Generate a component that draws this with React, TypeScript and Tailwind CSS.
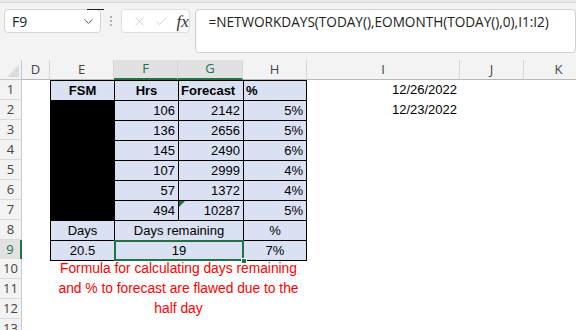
import { Check, ChevronDown, X } from "lucide-react";
import type { ReactNode } from "react";

const ui = "font-['Open_Sans',sans-serif]";
const cellFont = "font-['Liberation_Sans',Arial,sans-serif] text-[13px] text-black";

const cols = [
  { key: "D", w: "w-[28px]" },
  { key: "E", w: "w-[64px]" },
  { key: "F", w: "w-[64px]", sel: true },
  { key: "G", w: "w-[65px]", sel: true },
  { key: "H", w: "w-[64px]" },
  { key: "I", w: "w-[153px]" },
  { key: "J", w: "w-[64px]" },
  { key: "K", w: "w-[70px]" },
];

const data = [
  { hrs: 106, fc: 2142, pct: "5%" },
  { hrs: 136, fc: 2656, pct: "5%" },
  { hrs: 145, fc: 2490, pct: "6%" },
  { hrs: 107, fc: 2999, pct: "4%" },
  { hrs: 57, fc: 1372, pct: "4%" },
  { hrs: 494, fc: 10287, pct: "5%", flag: true },
];

const dates: Record<number, string> = { 1: "12/26/2022", 2: "12/23/2022" };

function RowHead({ n, sel }: { n: number; sel?: boolean }) {
  return (
    <div
      className={`w-[22px] shrink-0 flex items-center justify-center border-b border-[#dadada] text-[13px] ${ui} ${
        sel
          ? "bg-[#e1e1e1] text-[#217346] border-r-2 border-r-[#217346]"
          : "bg-[#f3f3f3] text-[#444] border-r border-r-[#c8c8c8]"
      }`}
    >
      {n}
    </div>
  );
}

function Cell({
  w,
  className = "",
  children,
}: {
  w: string;
  className?: string;
  children?: ReactNode;
}) {
  return (
    <div className={`${w} shrink-0 flex items-center ${cellFont} ${className}`}>
      {children}
    </div>
  );
}

function Tail({ row }: { row: number }) {
  return (
    <>
      <Cell w="w-[153px]" className="justify-end pr-[3px]">
        {dates[row]}
      </Cell>
      <Cell w="w-[64px]" />
      <Cell w="w-[70px]" />
    </>
  );
}

const tb = "border-l border-t border-black";
const blue = "bg-[#d9e1f2]";

export default function App() {
  return (
    <div className="w-[576px] h-[330px] overflow-hidden bg-white">
      {/* formula bar */}
      <div className="h-[60px] bg-[#f3f3f3]">
        <div className="h-[3px] bg-[#e9e9e9] border-b border-[#d6d6d6]" />
        <div className="flex items-start pt-[6px] pl-[4px]">
          <div className="relative w-[101px] h-[24px] bg-white border border-[#d5d5d5] rounded-[4px] flex items-center pl-[7px] pr-[4px]">
            <div className="absolute top-[-1px] left-[82px] w-[17px] h-px bg-[#222]" />
            <span className={`${ui} text-[14px] text-[#222] flex-1`}>F9</span>
            <ChevronDown size={15} strokeWidth={1.5} className="text-[#555]" />
          </div>
          <div className="w-[22px] h-[24px] flex flex-col items-center justify-center gap-[2px]">
            <span className="w-[2px] h-[2px] bg-[#9a9a9a] rounded-full" />
            <span className="w-[2px] h-[2px] bg-[#9a9a9a] rounded-full" />
            <span className="w-[2px] h-[2px] bg-[#9a9a9a] rounded-full" />
          </div>
          <div className="w-[72px] h-[24px] bg-white border border-[#dedede] rounded-[4px] flex items-center pl-[10px]">
            <X size={15} strokeWidth={1.2} className="text-[#c4c4c4]" />
            <Check size={15} strokeWidth={1.2} className="text-[#c4c4c4] ml-[7px]" />
            <span className="ml-[7px] font-['Liberation_Serif',serif] italic text-[17px] text-[#333] leading-none">
              fx
            </span>
          </div>
          <div className="ml-[5px] w-[400px] h-[44px] bg-white border border-[#d0d0d0] rounded-[4px] pl-[12px] leading-[22px]">
            <span className={`${ui} text-[13.6px] text-[#222]`}>
              =NETWORKDAYS(TODAY(),EOMONTH(TODAY(),0),I1:I2)
            </span>
          </div>
        </div>
      </div>

      {/* column headers */}
      <div className="flex h-5">
        <div className="w-[22px] shrink-0 bg-[#f3f3f3] border-r border-b border-[#c8c8c8] relative">
          <svg className="absolute right-[2px] bottom-[2px]" width="12" height="12">
            <polygon points="12,0 12,12 0,12" fill="#dcdcdc" />
          </svg>
        </div>
        {cols.map((c) => (
          <div
            key={c.key}
            className={`${c.w} shrink-0 flex items-center justify-center text-[13px] ${ui} border-r border-[#d6d6d6] ${
              c.sel
                ? "bg-[#e1e1e1] text-[#217346] border-b-2 border-b-[#217346]"
                : "bg-[#f3f3f3] text-[#444] border-b border-b-[#b8b8b8]"
            }`}
          >
            {c.key}
          </div>
        ))}
      </div>

      {/* row 1 */}
      <div className="flex h-5">
        <RowHead n={1} />
        <Cell w="w-[28px]" />
        <Cell w="w-[64px]" className={`${tb} ${blue} justify-center font-bold`}>
          FSM
        </Cell>
        <Cell w="w-[64px]" className={`${tb} ${blue} justify-center font-bold`}>
          Hrs
        </Cell>
        <Cell w="w-[65px]" className={`${tb} ${blue} pl-[2px] font-bold`}>
          Forecast
        </Cell>
        <Cell w="w-[64px]" className={`${tb} ${blue} border-r pl-[2px] font-bold`}>
          %
        </Cell>
        <Tail row={1} />
      </div>

      {/* rows 2-7 */}
      {data.map((d, i) => (
        <div key={i} className="flex h-5">
          <RowHead n={i + 2} />
          <Cell w="w-[28px]" />
          <Cell w="w-[64px]" className={`${tb} bg-black`} />
          <Cell w="w-[64px]" className={`${tb} ${blue} justify-end pr-[3px]`}>
            {d.hrs}
          </Cell>
          <Cell w="w-[65px]" className={`${tb} ${blue} justify-end pr-[3px] relative`}>
            {d.flag && (
              <div className="absolute top-0 left-0 w-0 h-0 border-t-[6px] border-r-[6px] border-t-[#1e7145] border-r-transparent" />
            )}
            {d.fc}
          </Cell>
          <Cell w="w-[64px]" className={`${tb} ${blue} border-r justify-end pr-[3px]`}>
            {d.pct}
          </Cell>
          <Tail row={i + 2} />
        </div>
      ))}

      {/* row 8 */}
      <div className="flex h-5">
        <RowHead n={8} />
        <Cell w="w-[28px]" />
        <Cell w="w-[64px]" className={`${tb} ${blue} justify-center`}>
          Days
        </Cell>
        <Cell w="w-[129px]" className={`${tb} ${blue} justify-center`}>
          Days remaining
        </Cell>
        <Cell w="w-[64px]" className={`${tb} ${blue} border-r justify-center`}>
          %
        </Cell>
        <Tail row={8} />
      </div>

      {/* row 9 */}
      <div className="flex h-5">
        <RowHead n={9} sel />
        <Cell w="w-[28px]" />
        <Cell w="w-[64px]" className={`${tb} border-b ${blue} justify-center h-[21px]`}>
          20.5
        </Cell>
        <Cell w="w-[129px]" className={`${tb} border-b ${blue} justify-center h-[21px] relative`}>
          <div className="absolute left-[-1px] top-[-1px] right-[-1px] bottom-[-1px] border-2 border-[#217346]" />
          <div className="absolute right-[-4px] bottom-[-4px] w-[6px] h-[6px] bg-[#217346] border border-white" />
          19
        </Cell>
        <Cell w="w-[64px]" className={`${tb} border-b border-r ${blue} justify-center h-[21px]`}>
          7%
        </Cell>
        <Tail row={9} />
      </div>

      {/* rows 10-13 */}
      {[
        "Formula for calculating days remaining",
        "and % to forecast are flawed due to the",
        "half day",
        "",
      ].map((t, i) => (
        <div key={i} className={`flex h-5 ${i === 0 ? "-mt-px" : ""}`}>
          <RowHead n={i + 10} />
          <Cell w="w-[28px]" />
          <div className="w-[257px] shrink-0 flex items-center justify-center whitespace-nowrap font-['Liberation_Sans',Arial,sans-serif] text-[13.8px] text-[#ff0000]">
            {t}
          </div>
        </div>
      ))}
    </div>
  );
}
